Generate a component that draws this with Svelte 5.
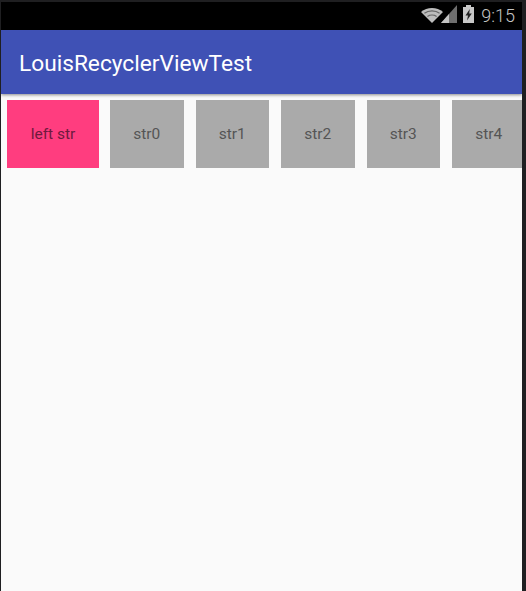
<script>
  const items = ['str0', 'str1', 'str2', 'str3', 'str4'];
</script>

<div class="frame">
  <div class="phone">
    <div class="status">
      <svg class="wifi" width="22" height="15" viewBox="0 0 22 15">
        <path d="M0 4 C6 -1.3 16 -1.3 22 4 L11 15 Z" fill="#bdbdbd" />
        <path d="M3.4 5.2 C7.6 2 14.4 2 18.6 5.2" fill="none" stroke="#666" stroke-width="1.2" />
        <path d="M6.4 8.4 C9 6.6 13 6.6 15.6 8.4" fill="none" stroke="#666" stroke-width="1.2" />
      </svg>
      <svg class="signal" width="16" height="18" viewBox="0 0 16 18">
        <path d="M0 18 L16 0 V18 Z" fill="#6e6e6e" />
        <path d="M0 18 L8 9 V18 Z" fill="#c4c4c4" />
      </svg>
      <svg class="battery" width="11" height="18" viewBox="0 0 11 18">
        <path d="M3 0 H8 V2 H11 V18 H0 V2 H3 Z" fill="#c8c8c8" />
        <path d="M6.8 4 L2.5 10.5 H5 L4 15.5 L8.8 8.5 H6.2 Z" fill="#222" />
      </svg>
      <span class="time">9:15</span>
    </div>
    <header class="toolbar">LouisRecyclerViewTest</header>
    <div class="list">
      <div class="card left">left str</div>
      {#each items as item}
        <div class="card">{item}</div>
      {/each}
    </div>
  </div>
</div>

<style>
  :global(body) {
    margin: 0;
    background: #1f1f21;
  }

  .frame {
    width: 526px;
    height: 591px;
    box-sizing: border-box;
    padding: 2px 4px 0 1px;
    font-family: Roboto, "Liberation Sans", sans-serif;
    overflow: hidden;
  }

  .phone {
    height: 589px;
    background: #fafafa;
    overflow: hidden;
  }

  .status {
    height: 28px;
    box-sizing: border-box;
    padding: 0 7px 4px 0;
    background: #000;
    display: flex;
    justify-content: flex-end;
    align-items: center;
  }

  .wifi {
    margin-top: 3px;
  }

  .signal {
    margin-left: -2px;
    margin-right: 6px;
  }

  .battery {
    margin-right: 7px;
  }

  .time {
    color: #c4c4c4;
    font-size: 18px;
    font-weight: 300;
    line-height: 18px;
    margin-top: 4px;
  }

  .toolbar {
    height: 64px;
    box-sizing: border-box;
    padding: 2px 0 0 18px;
    display: flex;
    align-items: center;
    background: #3f51b5;
    color: #fff;
    font-size: 22.7px;
    box-shadow: 0 1px 3px rgba(0, 0, 0, 0.45);
    position: relative;
  }

  .list {
    display: flex;
    gap: 12px;
    padding: 6px 0 0 6px;
    width: 700px;
  }

  .card {
    width: 73.5px;
    height: 68px;
    display: flex;
    align-items: center;
    justify-content: center;
    background: #aaaaaa;
    color: #555;
    font-size: 15.5px;
  }

  .left {
    width: 92px;
    background: #ff3d7f;
    color: #6e1a3e;
    margin-right: -1px;
  }
</style>
